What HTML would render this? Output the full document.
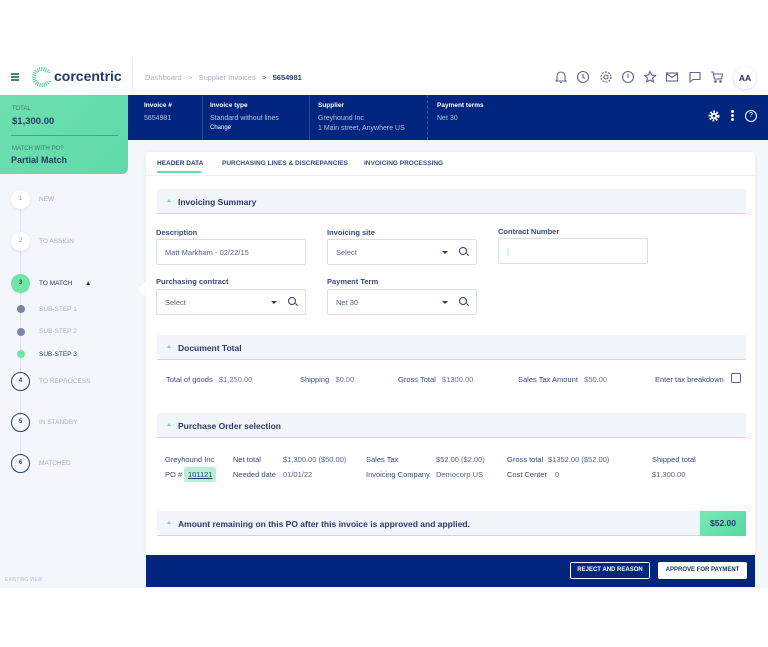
<!DOCTYPE html>
<html><head><meta charset="utf-8"><style>
*{margin:0;padding:0;box-sizing:border-box}
body{width:768px;height:647px;background:#fff;font-family:"Liberation Sans",sans-serif;position:relative;overflow:hidden;color:#2b3a6b}
.a{position:absolute}
.sm{font-size:7px}
.lbl{font-size:7.5px;font-weight:bold;color:#3a4a7a}
.v{font-size:7.5px;color:#55628a}
.step{position:absolute;left:11px;width:19px;height:19px;border-radius:50%;background:#fff;font-size:6px;text-align:center;line-height:19px;color:#8a93b0;box-shadow:0 1px 3px rgba(0,0,0,.08)}
.step.o{border:1.5px solid #2a3b7a;color:#2a3b7a;font-weight:bold;line-height:16px;background:#f3f6fa;box-shadow:none}
.st{position:absolute;left:39px;font-size:6.5px;color:#a9b0c8}
.sec{position:absolute;left:157px;width:589px;height:25px;background:#f2f5f9;border-bottom:1px solid #a8ecd0}
.sec span{position:absolute;left:21px;top:8px;font-size:8.5px;font-weight:bold;color:#2b3a6b}
.sec i{position:absolute;left:10px;top:10px;width:0;height:0;border-left:2px solid transparent;border-right:2px solid transparent;border-bottom:3px solid #5fe0a8}
.inp{position:absolute;height:26px;border:1px solid #d8dde8;border-radius:2px;background:#fff;font-size:7.5px;color:#55628a;padding:8px 0 0 8px}
.dd{position:absolute;right:28px;top:11px;border-left:3px solid transparent;border-right:3px solid transparent;border-top:3.5px solid #2b3a6b}
.mg{position:absolute;right:9px;top:7px;width:8px;height:8px;border:1.3px solid #2b3a6b;border-radius:50%}
.mg:after{content:"";position:absolute;left:6px;top:6px;width:3px;height:1.3px;background:#2b3a6b;transform:rotate(45deg)}
svg.i{position:absolute;top:70px}
</style></head><body>
<!-- top bar -->
<div class="a" style="left:11px;top:73px;width:8px;height:1.5px;background:#3a8a7a;box-shadow:0 3px 0 #3a8a7a,0 6px 0 #3a8a7a"></div>
<svg class="a" style="left:31px;top:66px" width="22" height="22" viewBox="0 0 22 22"><circle cx="11" cy="11" r="8" fill="none" stroke="#5fd0a0" stroke-width="4" stroke-dasharray="1.3 1.2" stroke-dashoffset="0" transform="rotate(40 11 11)" pathLength="60"/><rect x="15" y="7" width="8" height="8" fill="#fff"/></svg>
<div class="a" style="left:54px;top:68px;font-size:14px;font-weight:bold;color:#213a7a">corcentric</div>
<div class="a" style="left:132px;top:57px;width:1px;height:38px;background:#eef0f5"></div>
<div class="a" style="left:145px;top:73px;font-size:7.5px;color:#aab2c8">Dashboard &nbsp;&nbsp;&gt;&nbsp;&nbsp; Supplier Invoices &nbsp;&nbsp;<span style="color:#4a5680">&gt;</span>&nbsp;&nbsp; <b style="color:#2b3a6b">5654981</b></div>
<svg class="i" style="left:554px" width="14" height="14" viewBox="0 0 14 14" fill="none" stroke="#5a6690" stroke-width="1.1"><path d="M3 10V6a4 4 0 0 1 8 0v4l1 1H2z M6 12.5h2"/></svg>
<svg class="i" style="left:576px" width="14" height="14" viewBox="0 0 14 14" fill="none" stroke="#5a6690" stroke-width="1.1"><circle cx="7" cy="7" r="5.5"/><path d="M7 4v3.5l2 1"/></svg>
<svg class="i" style="left:599px" width="14" height="14" viewBox="0 0 14 14" fill="none" stroke="#5a6690" stroke-width="1.1"><circle cx="7" cy="7" r="2"/><circle cx="7" cy="7" r="5" stroke-dasharray="2 1.2"/></svg>
<svg class="i" style="left:621px" width="14" height="14" viewBox="0 0 14 14" fill="none" stroke="#5a6690" stroke-width="1.1"><circle cx="7" cy="7" r="5.5"/><path d="M7 4v4"/></svg>
<svg class="i" style="left:643px" width="14" height="14" viewBox="0 0 14 14" fill="none" stroke="#5a6690" stroke-width="1.1"><path d="M7 1.5l1.7 3.6 3.8.4-2.9 2.6.9 3.8L7 10l-3.4 1.9.9-3.8L1.6 5.5l3.8-.4z"/></svg>
<svg class="i" style="left:665px" width="14" height="14" viewBox="0 0 14 14" fill="none" stroke="#5a6690" stroke-width="1.1"><rect x="1.5" y="3" width="11" height="8"/><path d="M1.5 3.5L7 7.5l5.5-4"/></svg>
<svg class="i" style="left:688px" width="14" height="14" viewBox="0 0 14 14" fill="none" stroke="#5a6690" stroke-width="1.1"><path d="M2 2.5h10v7H5l-3 2.5z"/></svg>
<svg class="i" style="left:710px" width="14" height="14" viewBox="0 0 14 14" fill="none" stroke="#5a6690" stroke-width="1.1"><path d="M1 2h2l1.5 7h7l1-5H4"/><circle cx="5.5" cy="11.5" r=".8"/><circle cx="10.5" cy="11.5" r=".8"/></svg>
<div class="a" style="left:734px;top:67px;width:22px;height:22px;border-radius:50%;background:#fff;box-shadow:0 1px 4px rgba(0,0,0,.15);font-size:8.5px;font-weight:bold;text-align:center;line-height:22px;color:#1a2c70">AA</div>
<!-- sidebar -->
<div class="a" style="left:0;top:95px;width:146px;height:493px;background:#f3f6fa"></div>
<div class="a" style="left:0;top:95px;width:128px;height:79px;background:linear-gradient(135deg,#6fe0b0,#5ed9a8);border-radius:0 0 6px 0"></div>
<div class="a sm" style="left:12px;top:106px;color:#3a7a6a;font-size:6px">TOTAL</div>
<div class="a" style="left:12px;top:116px;font-size:9.5px;font-weight:bold;color:#2b3a6b">$1,300.00</div>
<div class="a" style="left:11px;top:135px;width:107px;height:1px;background:#3a7a6a;opacity:.6"></div>
<div class="a" style="left:12px;top:146px;color:#3a7a6a;font-size:6px">MATCH WITH PO?</div>
<div class="a" style="left:11px;top:155px;font-size:9px;font-weight:bold;color:#2b3a6b">Partial Match</div>
<div class="a" style="left:20px;top:200px;width:1px;height:265px;background:#dfe3ec"></div>
<div class="step" style="top:190px">1</div><div class="st" style="top:196px">NEW</div>
<div class="step" style="top:232px">2</div><div class="st" style="top:238px">TO ASSIGN</div>
<div class="step" style="top:274px;background:#6fe6a8;color:#2b3a6b;font-weight:bold">3</div><div class="st" style="top:280px;color:#2b3a6b">TO MATCH &nbsp;&nbsp;&nbsp;&nbsp;&nbsp;&nbsp;▲</div>
<div class="a" style="left:17px;top:305px;width:8px;height:8px;border-radius:50%;background:#7a86a8"></div><div class="st" style="top:306px">SUB-STEP 1</div>
<div class="a" style="left:17px;top:328px;width:8px;height:8px;border-radius:50%;background:#7a86a8"></div><div class="st" style="top:328px">SUB-STEP 2</div>
<div class="a" style="left:17px;top:350px;width:8px;height:8px;border-radius:50%;background:#6fe6a8"></div><div class="st" style="top:351px;color:#2b3a6b">SUB-STEP 3</div>
<div class="step o" style="top:372px">4</div><div class="st" style="top:378px">TO REPROCESS</div>
<div class="step o" style="top:413px">5</div><div class="st" style="top:419px">IN STANDBY</div>
<div class="step o" style="top:454px">6</div><div class="st" style="top:460px">MATCHED</div>
<div class="a" style="left:5px;top:577px;font-size:5px;color:#b8bfd2">EXISTING VIEW</div>
<!-- blue header -->
<div class="a" style="left:128px;top:95px;width:640px;height:45px;background:#02257f"></div>
<div class="a" style="left:144px;top:102px;font-size:6.5px;font-weight:bold;color:#fff">Invoice #</div>
<div class="a" style="left:144px;top:115px;font-size:7px;color:#b8c2e0">5654981</div>
<div class="a" style="left:202px;top:95px;width:1px;height:45px;background:#2a4a9a"></div>
<div class="a" style="left:210px;top:102px;font-size:6.5px;font-weight:bold;color:#fff">Invoice type</div>
<div class="a" style="left:210px;top:115px;font-size:7px;color:#b8c2e0">Standard without lines</div>
<div class="a" style="left:210px;top:125px;font-size:6px;color:#fff">Change</div>
<div class="a" style="left:309px;top:95px;width:1px;height:45px;background:#2a4a9a"></div>
<div class="a" style="left:318px;top:102px;font-size:6.5px;font-weight:bold;color:#fff">Supplier</div>
<div class="a" style="left:318px;top:115px;font-size:7px;color:#b8c2e0">Greyhound Inc</div>
<div class="a" style="left:318px;top:125px;font-size:7px;color:#b8c2e0">1 Main street, Anywhere US</div>
<div class="a" style="left:427px;top:95px;width:1px;height:45px;border-left:1px dashed #3a5aa8"></div>
<div class="a" style="left:437px;top:102px;font-size:6.5px;font-weight:bold;color:#fff">Payment terms</div>
<div class="a" style="left:437px;top:115px;font-size:7px;color:#b8c2e0">Net 30</div>
<svg class="a" style="left:708px;top:110px" width="12" height="12" viewBox="0 0 12 12"><circle cx="6" cy="6" r="4" fill="none" stroke="#fff" stroke-width="3" stroke-dasharray="1.6 1.4"/><circle cx="6" cy="6" r="3.2" fill="#fff"/><circle cx="6" cy="6" r="1.3" fill="#02257f"/></svg>
<div class="a" style="left:731px;top:110px;width:3px;height:3px;background:#fff;border-radius:50%;box-shadow:0 4px 0 #fff,0 8px 0 #fff"></div>
<div class="a" style="left:745px;top:110px;width:12px;height:12px;border-radius:50%;border:1.3px solid #fff;color:#fff;font-size:7px;text-align:center;line-height:10px">?</div>
<!-- main -->
<div class="a" style="left:146px;top:140px;width:622px;height:448px;background:#f3f6fa"></div>
<div class="a" style="left:138px;top:280px;width:0;height:0;border-top:9px solid transparent;border-bottom:9px solid transparent;border-right:9px solid #fff"></div>
<div class="a" style="left:146px;top:152px;width:609px;height:403px;background:#fff;border-radius:3px;box-shadow:0 1px 4px rgba(0,0,0,.06)"></div>
<div class="a" style="left:146px;top:175px;width:609px;height:1px;background:#eceff4"></div>
<div class="a" style="left:157px;top:160px;font-size:6.5px;font-weight:bold;color:#2b3a6b">HEADER DATA</div>
<div class="a" style="left:157px;top:171px;width:44px;height:2px;background:#5fe0a8"></div>
<div class="a" style="left:222px;top:160px;font-size:6.5px;font-weight:bold;color:#3a4a7a">PURCHASING LINES &amp; DISCREPANCIES</div>
<div class="a" style="left:364px;top:160px;font-size:6.5px;font-weight:bold;color:#3a4a7a">INVOICING PROCESSING</div>
<div class="sec" style="top:189px"><i></i><span>Invoicing Summary</span></div>
<div class="a lbl" style="left:156px;top:228px">Description</div>
<div class="inp" style="left:156px;top:239px;width:150px">Matt Markham - 02/22/15</div>
<div class="a lbl" style="left:327px;top:228px">Invoicing site</div>
<div class="inp" style="left:327px;top:239px;width:150px">Select<b class="dd"></b><b class="mg"></b></div>
<div class="a lbl" style="left:498px;top:227px">Contract Number</div>
<div class="inp" style="left:498px;top:238px;width:150px;color:#5fe0a8">|</div>
<div class="a lbl" style="left:156px;top:277px">Purchasing contract</div>
<div class="inp" style="left:156px;top:289px;width:150px">Select<b class="dd"></b><b class="mg"></b></div>
<div class="a lbl" style="left:327px;top:277px">Payment Term</div>
<div class="inp" style="left:327px;top:289px;width:150px">Net 30<b class="dd"></b><b class="mg"></b></div>
<div class="sec" style="top:335px"><i></i><span>Document Total</span></div>
<div class="a v" style="left:166px;top:375px;color:#3a4a7a">Total of goods &nbsp;&nbsp;<span style="color:#6a769a">$1,250.00</span></div>
<div class="a v" style="left:300px;top:375px;color:#3a4a7a">Shipping &nbsp;&nbsp;<span style="color:#6a769a">$0.00</span></div>
<div class="a v" style="left:398px;top:375px;color:#3a4a7a">Gross Total &nbsp;&nbsp;<span style="color:#6a769a">$1300.00</span></div>
<div class="a v" style="left:518px;top:375px;color:#3a4a7a">Sales Tax Amount &nbsp;&nbsp;<span style="color:#6a769a">$50.00</span></div>
<div class="a v" style="left:655px;top:375px;color:#3a4a7a">Enter tax breakdown</div>
<div class="a" style="left:731px;top:373px;width:10px;height:10px;border:1.2px solid #55628a;border-radius:2px"></div>
<div class="sec" style="top:413px"><i></i><span>Purchase Order selection</span></div>
<div class="a v" style="left:165px;top:455px;color:#3a4a7a">Greyhound Inc</div>
<div class="a v" style="left:165px;top:470px;color:#3a4a7a">PO #</div>
<div class="a v" style="left:184px;top:467px;background:#b9f0d4;padding:3px 4px;border-radius:2px;text-decoration:underline;color:#2b3a6b">101121</div>
<div class="a v" style="left:233px;top:455px;color:#3a4a7a">Net total</div>
<div class="a v" style="left:283px;top:455px">$1,300.00 ($50.00)</div>
<div class="a v" style="left:233px;top:470px;color:#3a4a7a">Needed date</div>
<div class="a v" style="left:283px;top:470px">01/01/22</div>
<div class="a v" style="left:366px;top:455px;color:#3a4a7a">Sales Tax</div>
<div class="a v" style="left:436px;top:455px">$52.00 ($2.00)</div>
<div class="a v" style="left:366px;top:470px;color:#3a4a7a">Invoicing Company</div>
<div class="a v" style="left:436px;top:470px">Democorp US</div>
<div class="a v" style="left:507px;top:455px;color:#3a4a7a">Gross total</div>
<div class="a v" style="left:548px;top:455px">$1352.00 ($52.00)</div>
<div class="a v" style="left:507px;top:470px;color:#3a4a7a">Cost Center</div>
<div class="a v" style="left:555px;top:470px">0</div>
<div class="a v" style="left:652px;top:455px;color:#3a4a7a">Shipped total</div>
<div class="a v" style="left:652px;top:470px">$1,300.00</div>
<div class="sec" style="top:511px"><i></i><span>Amount remaining on this PO after this invoice is approved and applied.</span></div>
<div class="a" style="left:700px;top:511px;width:46px;height:25px;background:linear-gradient(135deg,#7ae8b8,#55d9a0);font-size:8.5px;font-weight:bold;color:#2b3a6b;text-align:center;line-height:25px">$52.00</div>
<div class="a" style="left:146px;top:555px;width:609px;height:32px;background:#02257f"></div>
<div class="a" style="left:570px;top:562px;width:80px;height:17px;border:1px solid #fff;border-radius:2px;color:#fff;font-size:6px;font-weight:bold;text-align:center;line-height:15px">REJECT AND REASON</div>
<div class="a" style="left:658px;top:562px;width:89px;height:17px;background:#fff;border-radius:2px;color:#1a2c70;font-size:6px;font-weight:bold;text-align:center;line-height:17px">APPROVE FOR PAYMENT</div>
</body></html>
